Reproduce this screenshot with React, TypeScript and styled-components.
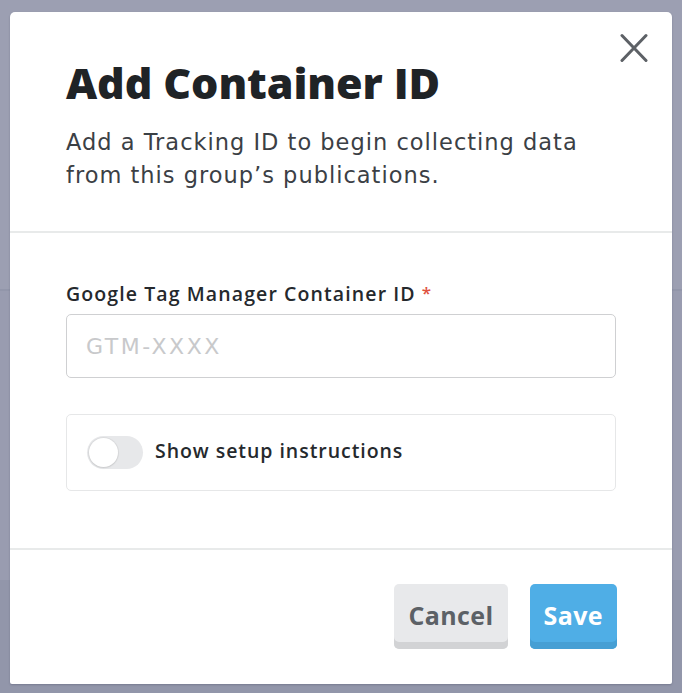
import React from "react";
import styled, { createGlobalStyle } from "styled-components";

const GlobalStyle = createGlobalStyle`
  html, body {
    margin: 0;
    padding: 0;
  }
  body {
    background: #989bae;
    font-family: "Open Sans", "DejaVu Sans", sans-serif;
    -webkit-font-smoothing: antialiased;
  }
  * {
    box-sizing: border-box;
  }
`;

/* Dimmed page behind the dialog */
const Backdrop = styled.div`
  min-height: 100vh;
  padding: 12px 10px 9px;
  background: linear-gradient(
    to bottom,
    #9c9fb2 0,
    #9c9fb2 289px,
    #9296aa 289px,
    #9296aa 291px,
    #999cb0 291px,
    #999cb0 580px,
    #9296aa 580px
  );
  display: flex;
  justify-content: center;
  align-items: flex-start;
`;

const Dialog = styled.div`
  position: relative;
  width: 662px;
  height: 672px;
  background: #ffffff;
  border-radius: 5px 5px 2px 2px;
  display: flex;
  flex-direction: column;
  box-shadow: 0 1px 2px rgba(40, 44, 70, 0.25);
`;

const CloseButton = styled.button`
  position: absolute;
  top: 21px;
  right: 23px;
  width: 30px;
  height: 30px;
  padding: 0;
  border: 0;
  background: transparent;
  color: #5d6166;
  cursor: pointer;
  display: flex;
  align-items: center;
  justify-content: center;
`;

const Header = styled.header`
  padding: 45px 56px 39px;
  border-bottom: 2px solid #e8eaea;
`;

const Title = styled.h1`
  margin: 0;
  font-family: "Open Sans", sans-serif;
  font-weight: 800;
  font-size: 43px;
  line-height: 52px;
  letter-spacing: -0.1px;
  color: #1f2326;
`;

const Lead = styled.p`
  margin: 17px 0 0;
  font-family: "DejaVu Sans", sans-serif;
  font-size: 22.5px;
  line-height: 33px;
  letter-spacing: 1px;
  color: #3b4045;
`;

const Body = styled.div`
  padding: 49px 56px 57px;
  border-bottom: 2px solid #e8eaea;
  display: flex;
  flex-direction: column;
`;

const FieldLabel = styled.label`
  font-family: "Open Sans", sans-serif;
  font-weight: 600;
  font-size: 19.5px;
  line-height: 24px;
  letter-spacing: 1.1px;
  color: #25292d;
  display: flex;
  align-items: flex-start;
`;

const Required = styled.span`
  color: #e0513f;
  font-size: 17px;
  line-height: 17px;
  margin-left: 6px;
  margin-top: 2px;
  letter-spacing: 0;
`;

const TextInput = styled.input`
  margin-top: 8px;
  width: 100%;
  height: 64px;
  border: 1.5px solid #cfd0d2;
  border-radius: 5px;
  padding: 0 19px;
  font-family: "DejaVu Sans", sans-serif;
  font-size: 22px;
  letter-spacing: 2.5px;
  color: #2a2e33;
  outline: none;
  background: #fff;

  &::placeholder {
    color: #c8c9cb;
  }
`;

const ToggleCard = styled.div`
  margin-top: 36px;
  height: 77px;
  border: 1.5px solid #e6e7e8;
  border-radius: 5px;
  padding: 0 20px;
  display: flex;
  align-items: center;
  gap: 12px;
`;

const Switch = styled.button<{ $on: boolean }>`
  position: relative;
  flex: none;
  width: 56px;
  height: 33px;
  padding: 0;
  border: 0;
  border-radius: 17px;
  background: ${(p) => (p.$on ? "#4eaee6" : "#e7e8ea")};
  cursor: pointer;
`;

const Knob = styled.span<{ $on: boolean }>`
  position: absolute;
  top: 2px;
  left: ${(p) => (p.$on ? "25px" : "2px")};
  width: 29px;
  height: 29px;
  border-radius: 50%;
  background: #ffffff;
  box-shadow: 0 0 0 1px rgba(0, 0, 0, 0.05), 0 1px 2px rgba(0, 0, 0, 0.08);
`;

const ToggleText = styled.span`
  font-family: "Open Sans", sans-serif;
  font-weight: 600;
  font-size: 19.5px;
  letter-spacing: 0.95px;
  color: #25292d;
  margin-top: -5px;
`;

const Footer = styled.footer`
  padding: 34px 55px 35px;
  display: flex;
  justify-content: flex-end;
  gap: 22px;
`;

const Button = styled.button<{ $variant: "neutral" | "primary" }>`
  height: 65px;
  padding: 0 14px 4px;
  border: 0;
  border-radius: 5px;
  font-family: "Open Sans", sans-serif;
  font-weight: 700;
  font-size: 25px;
  letter-spacing: 0.4px;
  cursor: pointer;
  display: flex;
  align-items: center;
  justify-content: center;
  background: ${(p) => (p.$variant === "primary" ? "#4faee6" : "#e8e9eb")};
  color: ${(p) => (p.$variant === "primary" ? "#ffffff" : "#5c6166")};
  box-shadow: inset 0 -7px 0
    ${(p) => (p.$variant === "primary" ? "#469fd4" : "#d2d3d5")};
`;

const CloseIcon = () => (
  <svg width="28" height="30" viewBox="0 0 28 30" fill="none">
    <path
      d="M2 2.5 L26 27.5 M26 2.5 L2 27.5"
      stroke="currentColor"
      strokeWidth="3"
      strokeLinecap="round"
    />
  </svg>
);

export default function App() {
  const [showSetup, setShowSetup] = React.useState(false);

  return (
    <>
      <GlobalStyle />
      <Backdrop>
        <Dialog role="dialog" aria-labelledby="dialog-title">
          <CloseButton aria-label="Close">
            <CloseIcon />
          </CloseButton>
          <Header>
            <Title id="dialog-title">Add Container ID</Title>
            <Lead>
              Add a Tracking ID to begin collecting data
              <br />
              from this group’s publications.
            </Lead>
          </Header>
          <Body>
            <FieldLabel htmlFor="gtm-id">
              Google Tag Manager Container ID<Required>*</Required>
            </FieldLabel>
            <TextInput id="gtm-id" placeholder="GTM-XXXX" />
            <ToggleCard>
              <Switch
                $on={showSetup}
                role="switch"
                aria-checked={showSetup}
                onClick={() => setShowSetup((v) => !v)}
              >
                <Knob $on={showSetup} />
              </Switch>
              <ToggleText>Show setup instructions</ToggleText>
            </ToggleCard>
          </Body>
          <Footer>
            <Button $variant="neutral">Cancel</Button>
            <Button $variant="primary">Save</Button>
          </Footer>
        </Dialog>
      </Backdrop>
    </>
  );
}
